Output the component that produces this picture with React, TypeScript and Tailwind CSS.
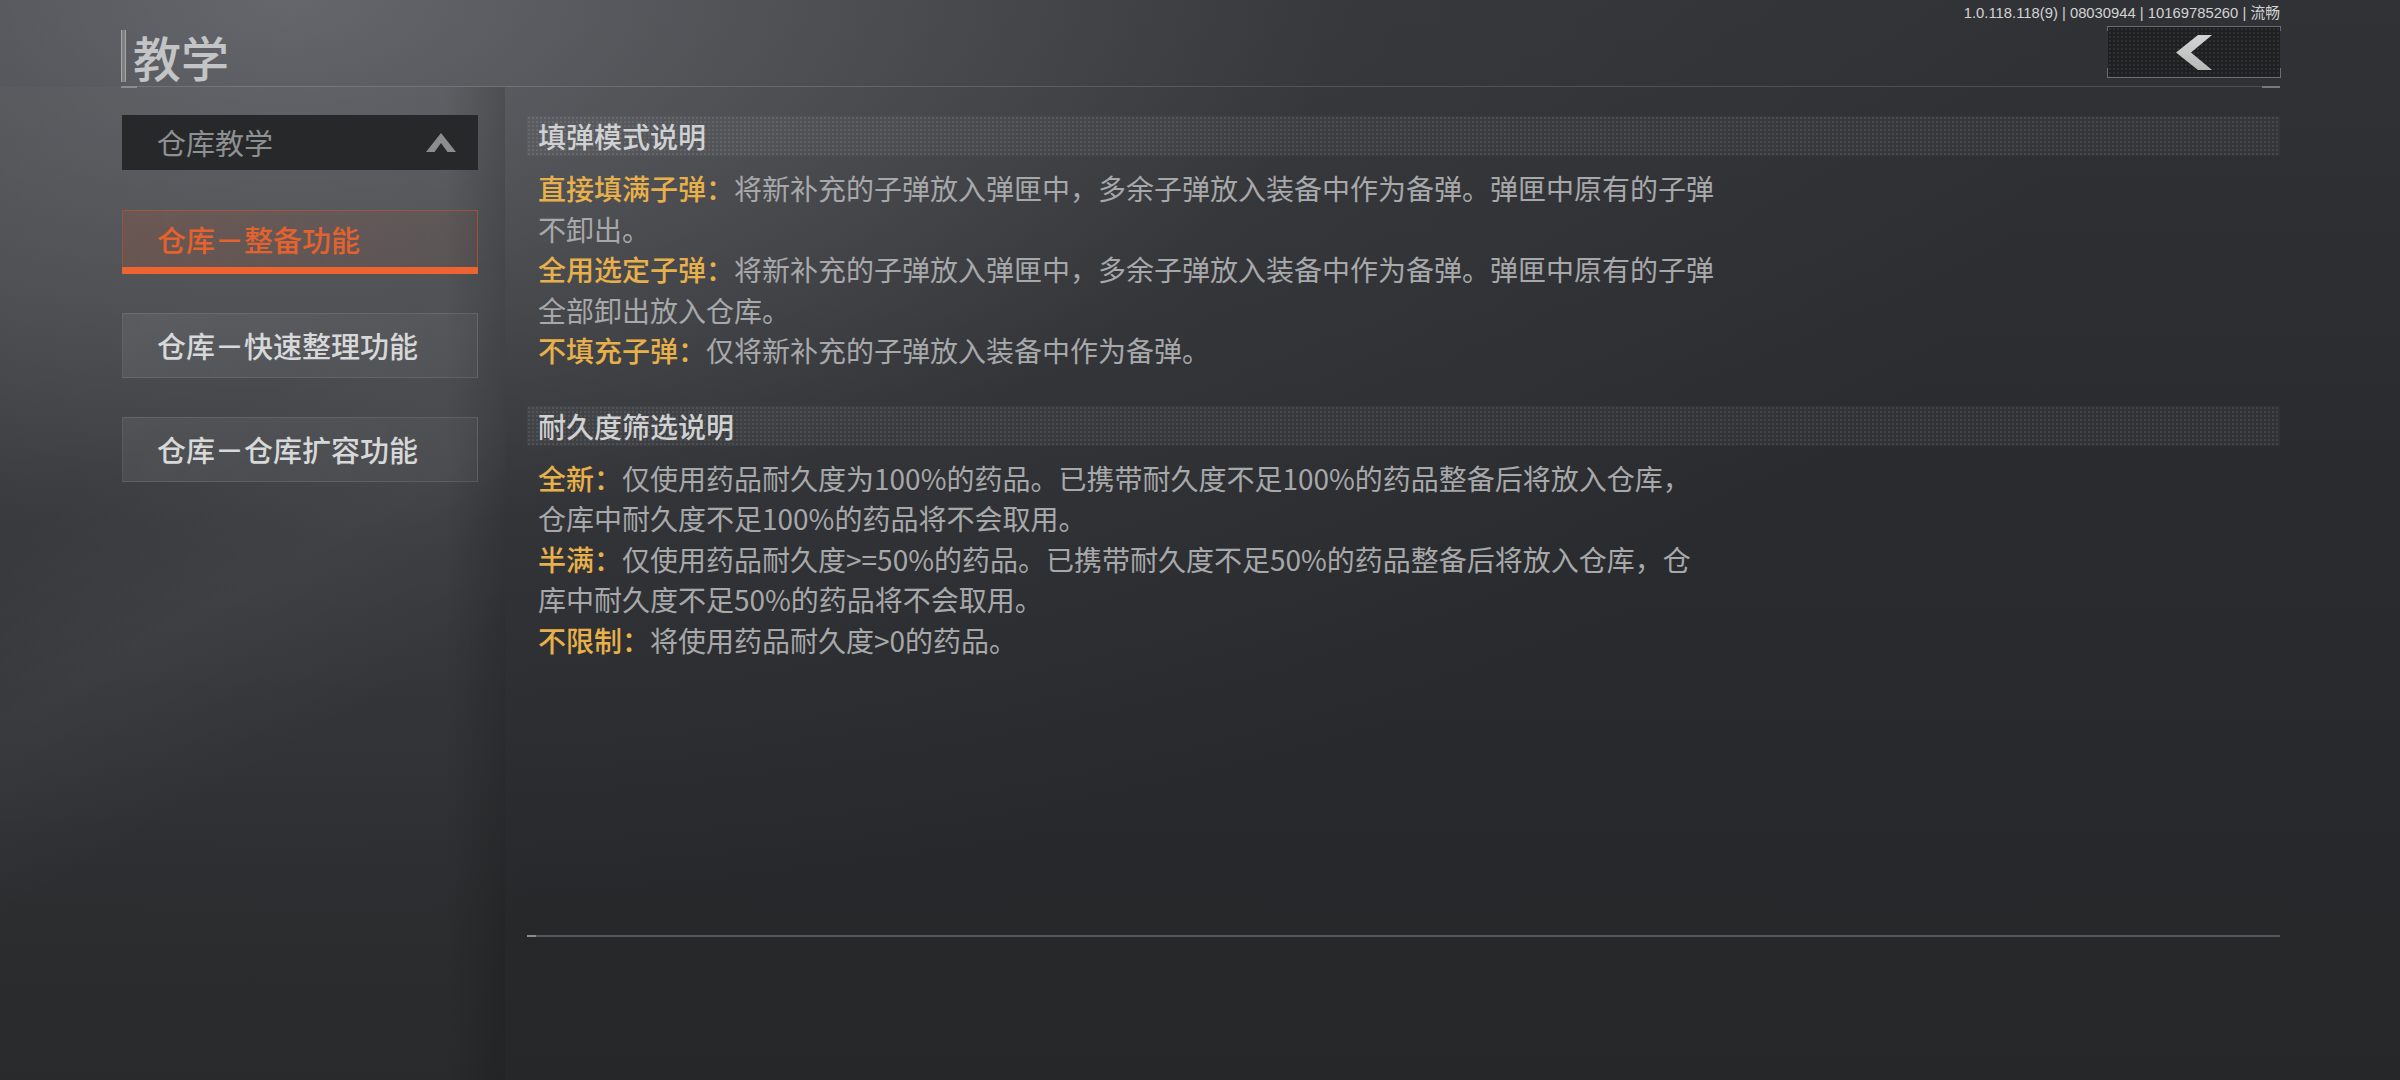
import React from 'react';

type Line = { label?: string; text: string };

const ammoLines: Line[] = [
  { label: '直接填满子弹：', text: '将新补充的子弹放入弹匣中，多余子弹放入装备中作为备弹。弹匣中原有的子弹' },
  { text: '不卸出。' },
  { label: '全用选定子弹：', text: '将新补充的子弹放入弹匣中，多余子弹放入装备中作为备弹。弹匣中原有的子弹' },
  { text: '全部卸出放入仓库。' },
  { label: '不填充子弹：', text: '仅将新补充的子弹放入装备中作为备弹。' },
];

const durabilityLines: Line[] = [
  { label: '全新：', text: '仅使用药品耐久度为100%的药品。已携带耐久度不足100%的药品整备后将放入仓库，' },
  { text: '仓库中耐久度不足100%的药品将不会取用。' },
  { label: '半满：', text: '仅使用药品耐久度>=50%的药品。已携带耐久度不足50%的药品整备后将放入仓库，仓' },
  { text: '库中耐久度不足50%的药品将不会取用。' },
  { label: '不限制：', text: '将使用药品耐久度>0的药品。' },
];

const menu = ['仓库－整备功能', '仓库－快速整理功能', '仓库－仓库扩容功能'];

function Section({ title, lines }: { title: string; lines: Line[] }) {
  return (
    <section>
      <div className="flex h-[40px] items-center bg-[#ffffff08] bg-[radial-gradient(rgba(255,255,255,0.09)_1px,transparent_1.2px)] bg-[length:4px_4px] pl-[11px]">
        <h2 className="text-[28px] font-medium leading-none text-[#d0d1d2]">{title}</h2>
      </div>
      <div className="mt-[12px] pl-[11px] text-[28px] leading-[40.5px] text-[#a7a8aa]">
        {lines.map((l, i) => (
          <p key={i} className="whitespace-nowrap">
            {l.label && <span className="font-medium text-[#e8b04a]">{l.label}</span>}
            {l.text}
          </p>
        ))}
      </div>
    </section>
  );
}

export default function App() {
  return (
    <div
      className="relative flex h-[1080px] w-[2400px] flex-col overflow-hidden bg-[radial-gradient(ellipse_at_12%_0%,rgba(118,120,126,0.75),rgba(70,72,76,0.3)_35%,transparent_60%),linear-gradient(180deg,#313235_0%,#2a2b2e_45%,#262729_100%)]"
      style={{ fontFamily: '"Noto Sans CJK SC", "Noto Sans", sans-serif' }}
    >
      <div
        className="absolute right-[120px] top-[2px] text-[14.8px] text-[#d2d3d4]"
        style={{ fontFamily: '"Liberation Sans", "Noto Sans CJK SC", sans-serif' }}
      >
        1.0.118.118(9) | 08030944 | 10169785260 | 流畅
      </div>

      {/* header */}
      <header className="flex h-[86px] items-start justify-between pl-[121px] pr-[120px] pt-[26px]">
        <div className="mt-[4px] flex items-center gap-[7px]">
          <span className="h-[52px] w-[5px] border-x border-[#a5a6a8] bg-[#7d7f82]" />
          <h1 className="text-[48px] font-medium leading-[52px] text-[#c3c4c6]">教学</h1>
        </div>
        <button className="relative flex h-[52px] w-[172px] items-center justify-center border-y border-[#6c6d70] bg-[#1f2022] bg-[radial-gradient(rgba(255,255,255,0.07)_1px,transparent_1.2px)] bg-[length:4px_4px]">
          <span className="absolute left-[-1px] top-[-1px] h-[5px] w-px bg-[#6c6d70]" />
          <span className="absolute bottom-[-1px] left-[-1px] h-[10px] w-px bg-[#6c6d70]" />
          <span className="absolute right-[-1px] top-[-1px] h-[5px] w-px bg-[#6c6d70]" />
          <span className="absolute bottom-[-1px] right-[-1px] h-[10px] w-px bg-[#6c6d70]" />
          <svg width="36" height="35" viewBox="0 0 36 35">
            <defs>
              <linearGradient id="chev" x1="0" y1="0" x2="0" y2="1">
                <stop offset="0" stopColor="#d4d4d4" />
                <stop offset="1" stopColor="#b9b9b9" />
              </linearGradient>
            </defs>
            <path d="M36 0H22L0 17.5 22 35H36L15 17.5Z" fill="url(#chev)" />
          </svg>
        </button>
      </header>

      <div className="mx-[120px] ml-[121px] flex h-px items-center bg-[#ffffff24]">
        <span className="h-[2px] w-[16px] bg-[#8a8b8d]" />
        <span className="flex-1" />
        <span className="h-[2px] w-[18px] bg-[#77787a]" />
      </div>

      <div className="flex flex-1">
        {/* sidebar */}
        <aside className="flex w-[505px] flex-col bg-[linear-gradient(90deg,transparent_88%,rgba(0,0,0,0.16)_100%),linear-gradient(150deg,transparent_35%,rgba(255,255,255,0.035)_50%,transparent_65%),linear-gradient(180deg,rgba(255,255,255,0.02),rgba(255,255,255,0.045)_20%,rgba(255,255,255,0.03)_60%,rgba(255,255,255,0.015))] pl-[122px] pt-[28px]">
          <div className="flex h-[55px] w-[356px] items-center justify-between bg-[#27282a] pl-[35px] pr-[22px]">
            <span className="text-[29px] leading-none text-[#8f9092]">仓库教学</span>
            <svg width="30" height="19" viewBox="0 0 30 19">
              <path d="M0 19 15 0 30 19H21.5L15 10 8.5 19Z" fill="#8c8d8f" />
            </svg>
          </div>

          <div className="mt-[40px] flex h-[64px] w-[356px] flex-col border border-b-0 border-[#c0552d99] bg-[linear-gradient(90deg,rgba(200,90,45,0.18),rgba(200,90,45,0.06))]">
            <div className="flex flex-1 items-center pl-[34px]">
              <span className="text-[29px] font-medium leading-none text-[#e4622d]">{menu[0]}</span>
            </div>
            <span className="mx-[-1px] h-[7px] rounded-[1px] bg-[#ee6430]" />
          </div>

          {menu.slice(1).map((m) => (
            <div
              key={m}
              className="mt-[39px] flex h-[65px] w-[356px] items-center border border-[#ffffff1a] bg-[linear-gradient(90deg,rgba(255,255,255,0.07),rgba(255,255,255,0.03))] pl-[34px]"
            >
              <span className="text-[29px] font-medium leading-none text-[#d7d8d9]">{m}</span>
            </div>
          ))}
        </aside>

        {/* content */}
        <main className="flex flex-1 flex-col pl-[22px] pr-[120px] pt-[29px]">
          <Section title="填弹模式说明" lines={ammoLines} />
          <div className="mt-[35px]">
            <Section title="耐久度筛选说明" lines={durabilityLines} />
          </div>
          <div className="mt-[275px] flex h-[2px] bg-[#56575a]">
            <span className="w-[9px] bg-[#8c8d8f]" />
          </div>
        </main>
      </div>
    </div>
  );
}
